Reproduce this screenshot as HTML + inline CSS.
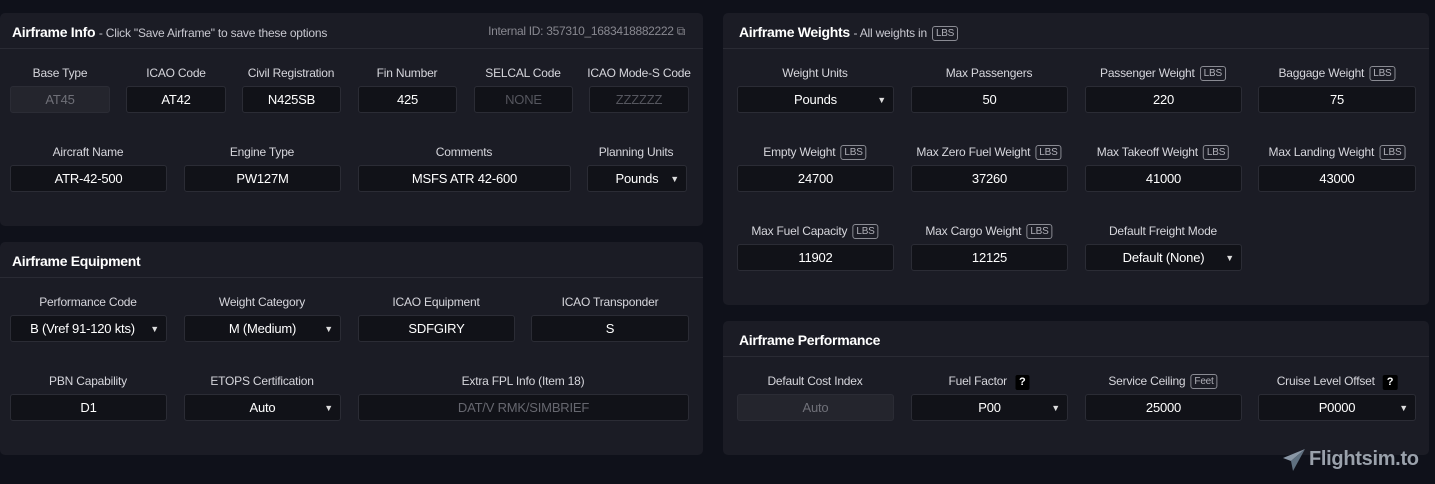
<!DOCTYPE html>
<html><head><meta charset="utf-8"><style>
*{box-sizing:border-box;margin:0;padding:0}
body{width:1435px;height:484px;background:#0f111a;font-family:"Liberation Sans",sans-serif;color:#e6e6ea;position:relative;overflow:hidden}
.p{position:absolute;background:#1b1c25;border-radius:5px}
.h{position:absolute;left:0;right:0;top:0;height:36px;border-bottom:1px solid #2a2b34;padding:11px 12px;font-size:14px;font-weight:bold;color:#fff;white-space:nowrap;letter-spacing:-0.3px}
.h small{font-weight:normal;font-size:12px;color:#c8c8d0;letter-spacing:-0.2px}
.l{position:absolute;font-size:12px;letter-spacing:-0.2px;color:#d6d6dc;text-align:center;white-space:nowrap;transform:translateX(-50%)}
.i{position:absolute;height:27px;background:#111218;border:1px solid #2b2c35;border-radius:3px;font-size:13px;letter-spacing:-0.2px;color:#fff;text-align:center;line-height:26px}
.d{background:#24252d;color:#6f7078}
.e{color:#55565e}
.s::after{content:"▼";position:absolute;right:7px;top:0;font-size:9px;color:#ddd}
.b{display:inline-block;border:1px solid #8a8b93;border-radius:3px;font-size:10px;padding:0 3px;line-height:13px;color:#b0b0b8;margin-left:5px;vertical-align:1px;font-weight:normal}
.q{display:inline-block;background:#000;color:#fff;font-weight:bold;font-size:11px;padding:0 4px;line-height:15px;border-radius:2px;margin-left:8px}
</style></head><body>
<div class="p" style="left:0;top:13px;width:703px;height:213px"><div class="h">Airframe Info <small>- Click "Save Airframe" to save these options</small><span style="position:absolute;right:18px;top:11px;font-size:12px;font-weight:normal;color:#888890">Internal ID: 357310_1683418882222 ⧉</span></div></div>
<div class="p" style="left:0;top:242px;width:703px;height:213px"><div class="h">Airframe Equipment</div></div>
<div class="p" style="left:723px;top:13px;width:706px;height:292px"><div class="h" style="padding-left:16px">Airframe Weights <small>- All weights in</small><span class="b">LBS</span></div></div>
<div class="p" style="left:723px;top:321px;width:706px;height:134px"><div class="h" style="padding-left:16px">Airframe Performance</div></div>

<div class="l" style="left:60px;top:66px">Base Type</div><div class="i d" style="left:10px;top:86px;width:100px">AT45</div>
<div class="l" style="left:176px;top:66px">ICAO Code</div><div class="i" style="left:126px;top:86px;width:100px">AT42</div>
<div class="l" style="left:291px;top:66px">Civil Registration</div><div class="i" style="left:242px;top:86px;width:99px">N425SB</div>
<div class="l" style="left:407px;top:66px">Fin Number</div><div class="i" style="left:358px;top:86px;width:99px">425</div>
<div class="l" style="left:523px;top:66px">SELCAL Code</div><div class="i e" style="left:474px;top:86px;width:99px">NONE</div>
<div class="l" style="left:639px;top:66px">ICAO Mode-S Code</div><div class="i e" style="left:589px;top:86px;width:100px">ZZZZZZ</div>

<div class="l" style="left:88px;top:145px">Aircraft Name</div><div class="i" style="left:10px;top:165px;width:157px">ATR-42-500</div>
<div class="l" style="left:262px;top:145px">Engine Type</div><div class="i" style="left:184px;top:165px;width:157px">PW127M</div>
<div class="l" style="left:464px;top:145px">Comments</div><div class="i" style="left:358px;top:165px;width:213px">MSFS ATR 42-600</div>
<div class="l" style="left:636px;top:145px">Planning Units</div><div class="i s" style="left:587px;top:165px;width:100px">Pounds</div>

<div class="l" style="left:88px;top:295px">Performance Code</div><div class="i s" style="left:10px;top:315px;width:157px;padding-right:12px">B (Vref 91-120 kts)</div>
<div class="l" style="left:262px;top:295px">Weight Category</div><div class="i s" style="left:184px;top:315px;width:157px">M (Medium)</div>
<div class="l" style="left:436px;top:295px">ICAO Equipment</div><div class="i" style="left:358px;top:315px;width:157px">SDFGIRY</div>
<div class="l" style="left:610px;top:295px">ICAO Transponder</div><div class="i" style="left:531px;top:315px;width:158px">S</div>

<div class="l" style="left:88px;top:374px">PBN Capability</div><div class="i" style="left:10px;top:394px;width:157px">D1</div>
<div class="l" style="left:262px;top:374px">ETOPS Certification</div><div class="i s" style="left:184px;top:394px;width:157px">Auto</div>
<div class="l" style="left:523px;top:374px">Extra FPL Info (Item 18)</div><div class="i e" style="left:358px;top:394px;width:331px;color:#66676f">DAT/V RMK/SIMBRIEF</div>

<div class="l" style="left:815px;top:66px">Weight Units</div><div class="i s" style="left:737px;top:86px;width:157px">Pounds</div>
<div class="l" style="left:989px;top:66px">Max Passengers</div><div class="i" style="left:911px;top:86px;width:157px">50</div>
<div class="l" style="left:1163px;top:66px">Passenger Weight<span class="b">LBS</span></div><div class="i" style="left:1085px;top:86px;width:157px">220</div>
<div class="l" style="left:1337px;top:66px">Baggage Weight<span class="b">LBS</span></div><div class="i" style="left:1258px;top:86px;width:158px">75</div>

<div class="l" style="left:815px;top:145px">Empty Weight<span class="b">LBS</span></div><div class="i" style="left:737px;top:165px;width:157px">24700</div>
<div class="l" style="left:989px;top:145px">Max Zero Fuel Weight<span class="b">LBS</span></div><div class="i" style="left:911px;top:165px;width:157px">37260</div>
<div class="l" style="left:1163px;top:145px">Max Takeoff Weight<span class="b">LBS</span></div><div class="i" style="left:1085px;top:165px;width:157px">41000</div>
<div class="l" style="left:1337px;top:145px">Max Landing Weight<span class="b">LBS</span></div><div class="i" style="left:1258px;top:165px;width:158px">43000</div>

<div class="l" style="left:815px;top:224px">Max Fuel Capacity<span class="b">LBS</span></div><div class="i" style="left:737px;top:244px;width:157px">11902</div>
<div class="l" style="left:989px;top:224px">Max Cargo Weight<span class="b">LBS</span></div><div class="i" style="left:911px;top:244px;width:157px">12125</div>
<div class="l" style="left:1163px;top:224px">Default Freight Mode</div><div class="i s" style="left:1085px;top:244px;width:157px">Default (None)</div>

<div class="l" style="left:815px;top:374px">Default Cost Index</div><div class="i d" style="left:737px;top:394px;width:157px">Auto</div>
<div class="l" style="left:989px;top:374px">Fuel Factor<span class="q">?</span></div><div class="i s" style="left:911px;top:394px;width:157px">P00</div>
<div class="l" style="left:1163px;top:374px">Service Ceiling<span class="b">Feet</span></div><div class="i" style="left:1085px;top:394px;width:157px">25000</div>
<div class="l" style="left:1337px;top:374px">Cruise Level Offset<span class="q">?</span></div><div class="i s" style="left:1258px;top:394px;width:158px">P0000</div>

<svg style="position:absolute;left:1282px;top:448px" width="24" height="24" viewBox="0 0 24 24"><path d="M23 1 L1 10 L9 13 Z" fill="#8a97a6"/><path d="M23 1 L9 13 L11 23 Z" fill="#5f7080"/></svg>
<div style="position:absolute;left:1309px;top:448px;font-size:20px;font-weight:bold;color:#9aa1ab;letter-spacing:-0.3px">Flightsim.to</div>
</body></html>
